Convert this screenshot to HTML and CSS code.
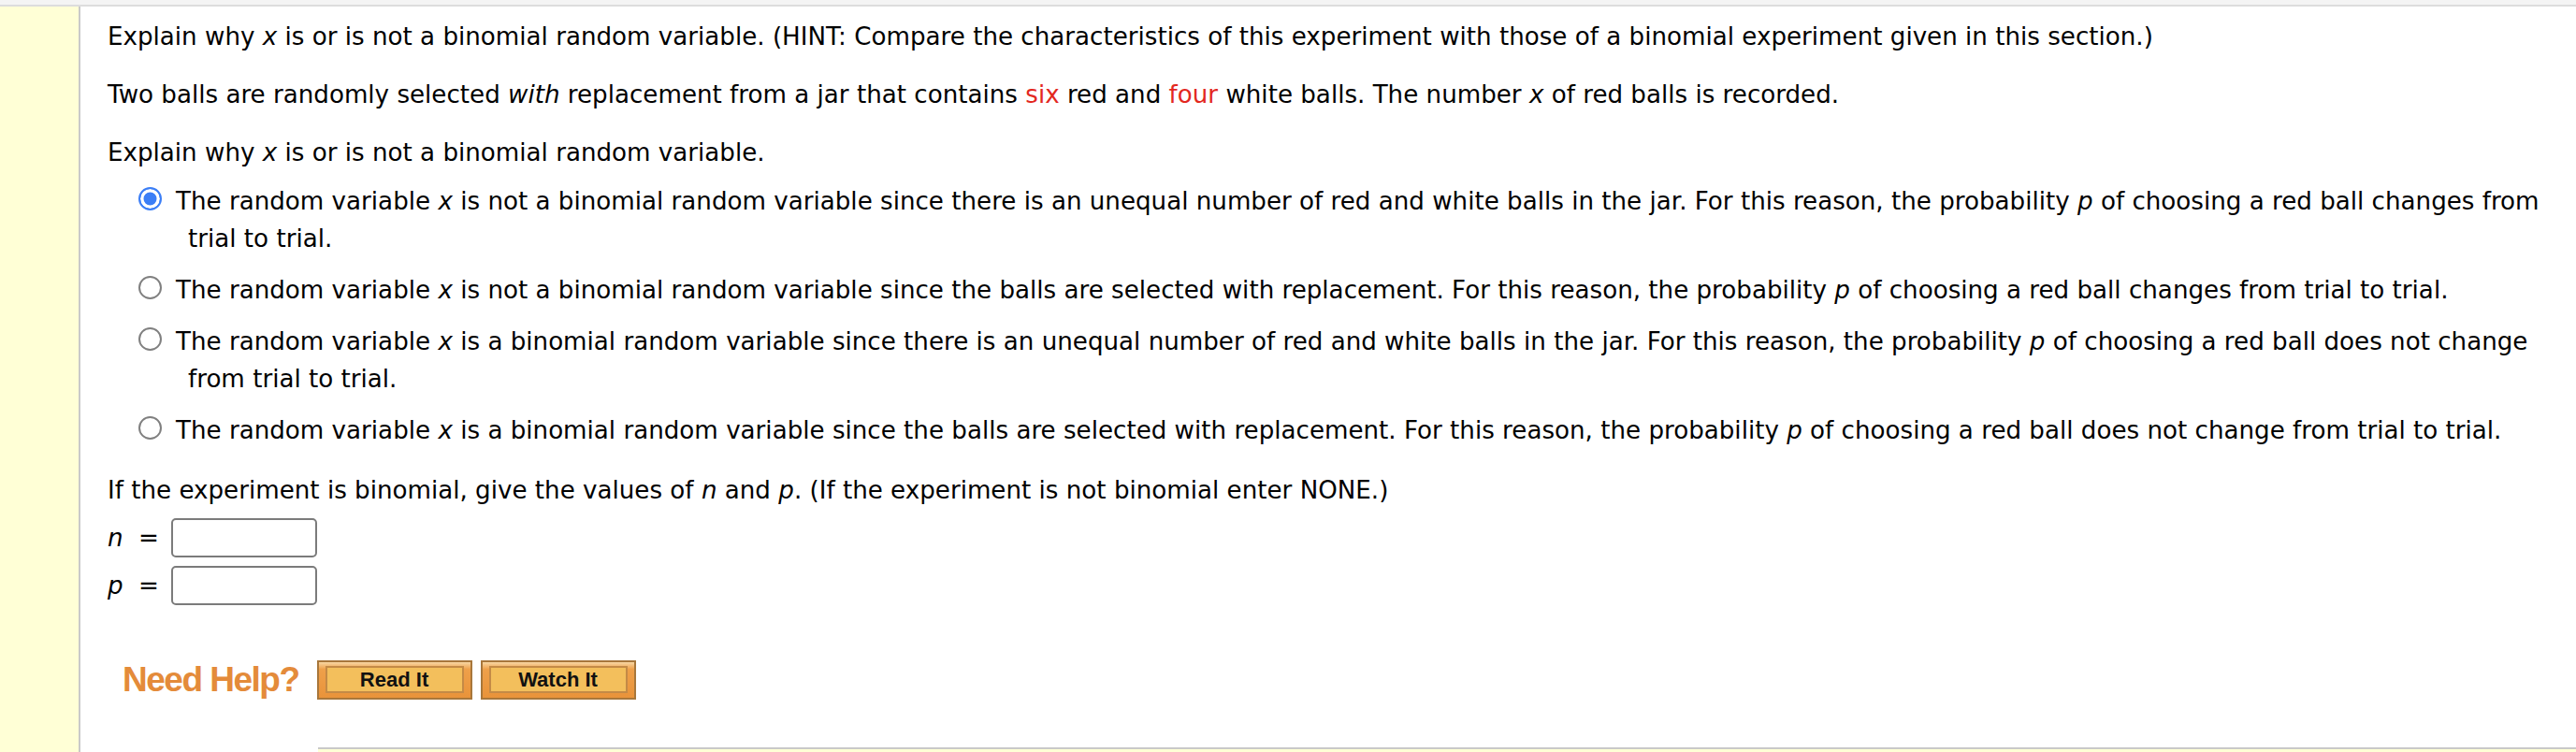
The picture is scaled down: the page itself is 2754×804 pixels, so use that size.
FILE: index.html
```html
<!DOCTYPE html>
<html lang="en">
<head>
<meta charset="utf-8">
<title>Binomial question</title>
<link rel="stylesheet" href="styles.css">
</head>
<body>
<div class="topbar"></div>
<div class="page">
  <aside class="gutter"></aside>
  <main class="content">
    <div class="question">
      <p class="para">Explain why <i>x</i> is or is not a binomial random variable. (HINT: Compare the characteristics of this experiment with those of a binomial experiment given in this section.)</p>
      <p class="para">Two balls are randomly selected <i>with</i> replacement from a jar that contains <span class="red">six</span> red and <span class="red">four</span> white balls. The number <i>x</i> of red balls is recorded.</p>
      <p class="para lead">Explain why <i>x</i> is or is not a binomial random variable.</p>
      <ul class="options">
        <li class="option"><label><input class="radio" type="radio" name="q" checked>The random variable <i>x</i> is not a binomial random variable since there is an unequal number of red and white balls in the jar. For this reason, the probability <i>p</i> of choosing a red ball changes from <span>trial to trial.</span></label></li>
        <li class="option"><label><input class="radio" type="radio" name="q">The random variable <i>x</i> is not a binomial random variable since the balls are selected with replacement. For this reason, the probability <i>p</i> of choosing a red ball changes from trial to trial.</label></li>
        <li class="option"><label><input class="radio" type="radio" name="q">The random variable <i>x</i> is a binomial random variable since there is an unequal number of red and white balls in the jar. For this reason, the probability <i>p</i> of choosing a red ball does not change <span>from trial to trial.</span></label></li>
        <li class="option"><label><input class="radio" type="radio" name="q">The random variable <i>x</i> is a binomial random variable since the balls are selected with replacement. For this reason, the probability <i>p</i> of choosing a red ball does not change from trial to trial.</label></li>
      </ul>
      <p class="para ask">If the experiment is binomial, give the values of <i>n</i> and <i>p</i>. (If the experiment is not binomial enter NONE.)</p>
      <div class="answers">
        <div class="arow"><span class="var"><i>n</i></span><span class="eq">=</span><input class="box" type="text"></div>
        <div class="arow"><span class="var"><i>p</i></span><span class="eq">=</span><input class="box" type="text"></div>
      </div>
      <div class="help">
        <span class="need">Need Help?</span>
        <button class="btn" type="button"><span class="btn-face">Read It</span></button>
        <button class="btn" type="button"><span class="btn-face">Watch It</span></button>
      </div>
    </div>
    <div class="next-box"></div>
  </main>
</div>
</body>
</html>
```

FILE: styles.css
```css
html, body {
  margin: 0;
  padding: 0;
  background: #ffffff;
}
body {
  font-family: "DejaVu Sans", Verdana, sans-serif;
  font-size: 26.15px;
  color: #000;
  overflow: hidden;
  height: 804px;
}
.topbar {
  height: 5px;
  background: #f4f4f4;
  border-bottom: 2px solid #dddddd;
}
.page {
  display: flex;
  height: 797px;
}
.gutter {
  width: 84px;
  flex: none;
  background: #ffffd6;
  border-right: 2px solid #c9c9c9;
}
.content {
  flex: 1;
  display: flex;
  flex-direction: column;
}
.question {
  padding: 12px 24px 0 29px;
}
.para {
  margin: 0 0 22px;
  line-height: 40px;
}
.para.lead {
  margin-bottom: 12px;
}
.red {
  color: #e3281e;
}
i {
  font-style: italic;
}
.options {
  list-style: none;
  margin: 0;
  padding: 0;
}
.option {
  line-height: 40px;
  margin: 0 0 15px;
  padding-left: 86px;
  text-indent: -53px;
}
.option:last-child {
  margin-bottom: 24px;
}
.radio {
  appearance: none;
  -webkit-appearance: none;
  box-sizing: border-box;
  width: 25px;
  height: 25px;
  margin: 0 15px 0 0;
  border: 2px solid #808080;
  border-radius: 50%;
  background: #fff;
  vertical-align: -1px;
}
.radio:checked {
  border: 2.5px solid #3b7ef6;
  background: #3b7ef6;
  box-shadow: inset 0 0 0 3.5px #fff;
}
.ask {
  margin-bottom: 10px;
}
.answers {
  display: flex;
  flex-direction: column;
  gap: 9px;
}
.arow {
  display: flex;
  align-items: center;
  height: 42px;
}
.var {
  width: 33px;
  flex: none;
}
.eq {
  width: 35px;
  flex: none;
}
.box {
  box-sizing: border-box;
  width: 156px;
  height: 42px;
  margin: 0;
  border: 2px solid #7b7b7b;
  border-radius: 5px;
  background: #fff;
  font: inherit;
}
.help {
  display: flex;
  align-items: center;
  margin-top: 59px;
  padding-left: 16px;
  height: 42px;
}
.need {
  font-family: "Liberation Sans", Arial, sans-serif;
  font-weight: bold;
  font-size: 37px;
  letter-spacing: -1.5px;
  color: #e48b3a;
  margin-right: 19px;
}
.btn {
  box-sizing: border-box;
  width: 166px;
  height: 42px;
  margin: 0 9px 0 0;
  padding: 4px 7px 5px;
  border: 2px solid #a8773b;
  background: linear-gradient(#f8d6a2 0, #eea04a 20%, #e9933a 100%);
  cursor: pointer;
}
.btn-face {
  display: flex;
  align-items: center;
  justify-content: center;
  box-sizing: border-box;
  height: 100%;
  border: 2px solid #c48a46;
  background: #f3bf5c;
  font-family: "Liberation Sans", Arial, sans-serif;
  font-weight: bold;
  font-size: 22px;
  color: #111;
}
.next-box {
  flex: 1;
  margin: 51px 0 0 254px;
  border-top: 2px solid #c9c9c9;
  background: #ffffd6;
}
```
